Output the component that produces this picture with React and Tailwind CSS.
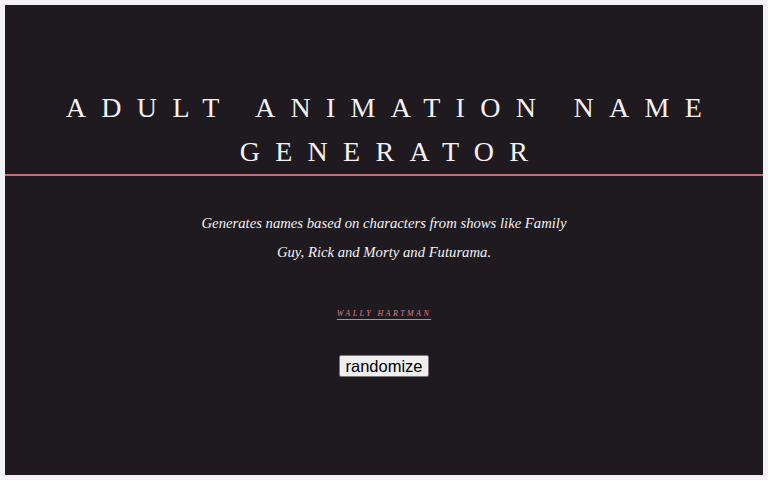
import React, { useState } from "react";

const names = ["Wally Hartman", "Bort Sanchez", "Glen Quagmorty", "Hermes Pickle"];

export default function App() {
  const [idx, setIdx] = useState(0);

  return (
    <div className="h-screen w-full bg-[#f3f2f4] p-[5px]">
      <div className="h-full w-full bg-[#1e1a1f] text-[#f4f1f3] font-['Liberation_Serif',serif] flex flex-col items-center">
        <h1 className="mt-[81px] w-full border-b-2 border-[#c96b7b] pb-0 text-center text-[28px] leading-[44px] tracking-[15.3px] font-normal uppercase pl-[15px]">
          Adult Animation Name Generator
        </h1>
        <p className="mt-[33px] w-[390px] text-center text-[14.7px] italic leading-[29px]">
          Generates names based on characters from shows like Family Guy, Rick and Morty and Futurama.
        </p>
        <a className="mt-[41px] text-[8px] italic uppercase tracking-[2.4px] text-[#e27a91] underline underline-offset-[3px] decoration-[#e27a91]">
          {names[idx]}
        </a>
        <button
          onClick={() => setIdx((idx + 1) % names.length)}
          className="mt-[35px] bg-[#efefef] text-black font-['Liberation_Sans',sans-serif] text-[16.5px] leading-[20px] px-[5px] border border-[#767676] rounded-[2px]"
        >
          randomize
        </button>
      </div>
    </div>
  );
}
